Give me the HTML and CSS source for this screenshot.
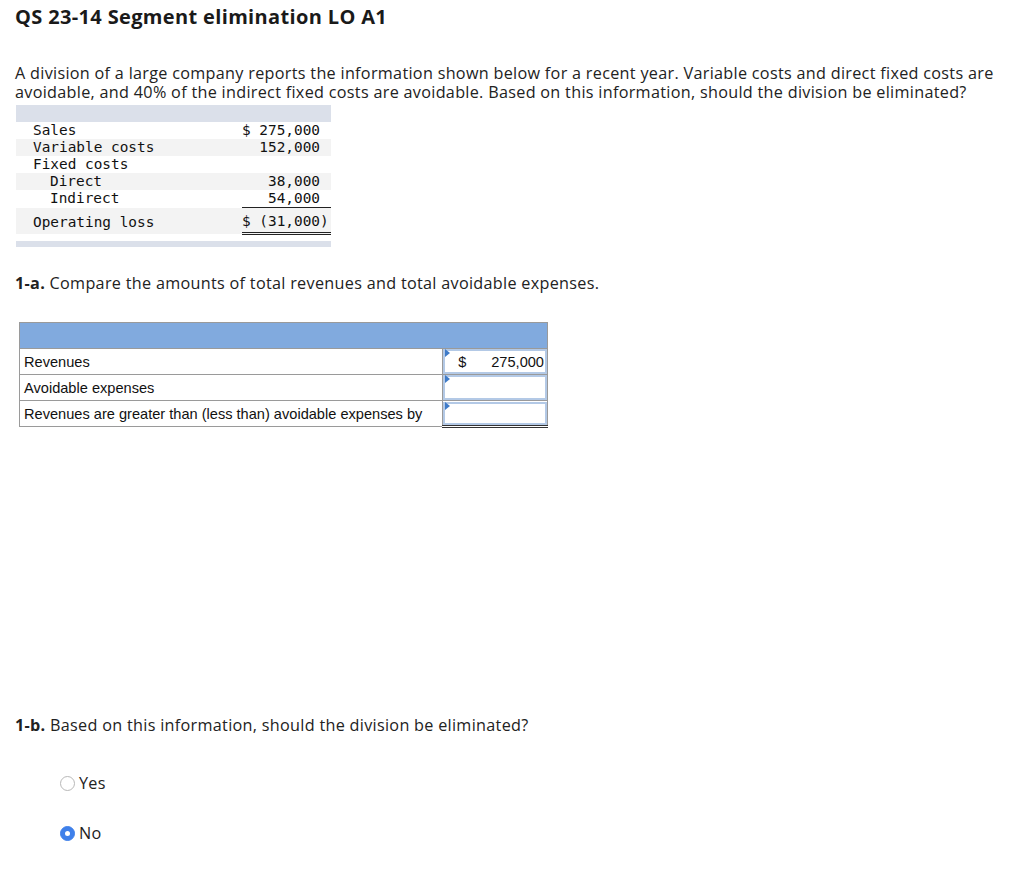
FILE: index.html
```html
<!DOCTYPE html>
<html>
<head>
<meta charset="utf-8">
<link rel="stylesheet" href="styles.css">
</head>
<body>
<h1 class="title">QS 23-14 Segment elimination LO A1</h1>
<p class="intro">A division of a large company reports the information shown below for a recent year. Variable costs and direct fixed costs are avoidable, and 40% of the indirect fixed costs are avoidable. Based on this information, should the division be eliminated?</p>

<div class="fin">
  <div class="fin-bar"></div>
  <table class="fin-table">
    <tr><td class="lbl">Sales</td><td class="val">$ 275,000</td></tr>
    <tr class="alt"><td class="lbl">Variable costs</td><td class="val">152,000</td></tr>
    <tr><td class="lbl">Fixed costs</td><td class="val"></td></tr>
    <tr class="alt"><td class="lbl ind">Direct</td><td class="val">38,000</td></tr>
    <tr><td class="lbl ind">Indirect</td><td class="val single">54,000</td></tr>
    <tr class="alt total"><td class="lbl">Operating loss</td><td class="val double">$ (31,000<span class="hang">)</span></td></tr>
  </table>
  <div class="fin-gap"></div>
  <div class="fin-bar"></div>
</div>

<p class="q q1"><b>1-a.</b> Compare the amounts of total revenues and total avoidable expenses.</p>

<table class="ans">
  <tr class="ans-head"><td colspan="2"></td></tr>
  <tr><td class="ans-lbl">Revenues</td><td class="ans-cell"><div class="box filled"><span class="mark"></span><span class="cur">$</span><span class="num">275,000</span></div></td></tr>
  <tr><td class="ans-lbl">Avoidable expenses</td><td class="ans-cell"><div class="box"><span class="mark"></span></div></td></tr>
  <tr class="ans-total"><td class="ans-lbl">Revenues are greater than (less than) avoidable expenses by</td><td class="ans-cell tot"><div class="box"><span class="mark"></span></div></td></tr>
</table>

<p class="q q2"><b>1-b.</b> Based on this information, should the division be eliminated?</p>

<div class="radios">
  <div class="radio"><span class="dot"></span><span class="rlabel">Yes</span></div>
  <div class="radio"><span class="dot on"></span><span class="rlabel">No</span></div>
</div>
</body>
</html>
```

FILE: styles.css
```css
body {
  margin: 0;
  padding: 0 15px;
  font-family: "Open Sans", "Liberation Sans", sans-serif;
  color: #1a1a1a;
  background: #fff;
}
.title {
  font-size: 20px;
  font-weight: 700;
  margin: 4px 0 0 0;
  line-height: 26px;
  color: #1a1a1a;
  letter-spacing: 0.35px;
}
.intro {
  font-size: 16.2px;
  letter-spacing: 0.3px;
  line-height: 19px;
  margin: 34px 0 0 0;
  color: #222;
}
.fin {
  width: 315px;
  margin: 3px 0 0 1px;
}
.fin-bar {
  height: 17px;
  background: #dbe0ea;
}
.fin-bar:last-child {
  height: 6px;
}
.fin-gap {
  height: 6px;
}
.fin-table {
  width: 100%;
  border-collapse: collapse;
  font-family: "DejaVu Sans Mono", monospace;
  font-size: 14.4px;
  color: #111;
}
.fin-table td {
  padding: 0;
  height: 17px;
  line-height: 17px;
  white-space: pre;
}
.fin-table tr.alt td { background: #f3f3f3; }
.lbl { padding-left: 17px !important; }
.lbl.ind { padding-left: 34px !important; }
.val {
  width: 77px;
  text-align: right;
  padding-right: 11px !important;
}
.val.single { border-bottom: 1px solid #222; }
.fin-table tr.total td {
  padding-top: 5px;
  padding-bottom: 2px;
}
.val.double { border-bottom: 3px double #222; }
.hang { margin-right: -8.7px; }

.q {
  font-size: 16.2px;
  letter-spacing: 0.3px;
  line-height: 20px;
  margin: 0;
  color: #222;
}
.q b { font-weight: 700; }
.q1 { margin-top: 26px; }
.ans {
  margin: 29px 0 0 4px;
  border-collapse: collapse;
  width: 529px;
  font-family: "Liberation Sans", Arial, sans-serif;
  font-size: 14.6px;
  color: #111;
}
.ans td {
  border: 1px solid #9a9a9a;
  padding: 0;
  height: 25px;
}
.ans-head td {
  background: #81aade;
  height: 25px;
}
.ans-lbl {
  padding-left: 4px !important;
  width: 420px;
}
.ans-cell {
  width: 104px;
  padding: 0 !important;
}
.box {
  position: relative;
  height: 21px;
  border: 2px solid #b3c9e6;
  display: flex;
  align-items: center;
  font-size: 14.6px;
}
.tot .box { height: 19px; }
.mark {
  position: absolute;
  left: 0;
  top: 0;
  width: 0;
  height: 0;
  border-top: 4px solid transparent;
  border-bottom: 4px solid transparent;
  border-left: 5px solid #3f7bc8;
  transform: translate(0, -2px);
}
.cur { margin-left: 13px; }
.num { margin-left: auto; margin-right: 1px; }
.ans-cell.tot {
  border-top: 1px solid #1d2b4a;
  border-bottom: 3px double #333;
  height: 23px;
}
.q2 { margin-top: 287px; }
.radios {
  margin: 38px 0 0 45px;
}
.radio {
  display: flex;
  align-items: center;
  height: 20px;
  margin-bottom: 30px;
  font-size: 16.2px;
  letter-spacing: 0.3px;
  color: #222;
}
.dot {
  width: 15px;
  height: 15px;
  border-radius: 50%;
  border: 1px solid #b8b8b8;
  box-sizing: border-box;
  background: #fff;
  margin-right: 4px;
  position: relative;
}
.dot.on {
  background: #3f80ea;
  border-color: #3f80ea;
}
.dot.on::after {
  content: "";
  position: absolute;
  left: 50%;
  top: 50%;
  width: 5px;
  height: 5px;
  margin: -2.5px 0 0 -2.5px;
  border-radius: 50%;
  background: #fff;
}
```
